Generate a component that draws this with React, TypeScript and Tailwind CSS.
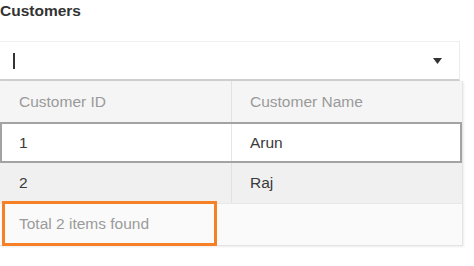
const rows = [
  { id: '1', name: 'Arun', selected: true },
  { id: '2', name: 'Raj', selected: false },
]

export default function App() {
  return (
    <div className="h-[266px] w-[474px] bg-white font-['Liberation_Sans',Arial,sans-serif] text-[15.5px]">
      <div className="h-[41px] pt-[1px] text-[15.5px] font-bold leading-[20px] text-[#333]">
        Customers
      </div>
      <div className="flex h-[40px] w-[460px] items-center justify-between border-t border-r border-t-[#f0f0f0] border-r-[#ececec] border-b-2 border-b-[#cfcfcf] pr-[17px] pl-[13px]">
        <span className="mt-[1px] h-[16px] w-[2px] bg-[#333]" />
        <svg width="9" height="6" viewBox="0 0 9 6">
          <path d="M0 0 L9 0 L4.5 6 Z" fill="#333" />
        </svg>
      </div>
      <div className="w-[463px] border-r border-b border-[#e4e4e4] shadow-[1px_1px_2px_rgba(0,0,0,0.08)]">
        <div className="flex h-[41px] bg-[#f5f5f5] text-[#9a9a9a]">
          <div className="flex w-[232px] items-center border-r border-[#e2e2e2] pl-[19px]">
            Customer ID
          </div>
          <div className="flex flex-1 items-center pl-[18px]">Customer Name</div>
        </div>
        {rows.map((row) => (
          <div
            key={row.id}
            className={
              row.selected
                ? 'flex h-[41px] border-2 border-[#a3a3a3] bg-white text-[#3a3a3a]'
                : 'flex h-[40px] bg-[#f0f0f0] text-[#3a3a3a]'
            }
          >
            <div
              className={
                row.selected
                  ? 'flex w-[230px] items-center border-r border-[#e6e6e6] pl-[17px]'
                  : 'flex w-[232px] items-center border-r border-[#e2e2e2] pl-[19px]'
              }
            >
              {row.id}
            </div>
            <div className="flex flex-1 items-center pl-[18px]">{row.name}</div>
          </div>
        ))}
        <div className="flex h-[42px] border-t border-[#e8e8e8] bg-[#fafafa]">
          <div className="-mt-[3px] ml-[2px] flex h-[45px] w-[215px] items-center border-[3px] border-[#f58025] pl-[14px] text-[#9a9a9a]">
            Total 2 items found
          </div>
        </div>
      </div>
    </div>
  )
}
